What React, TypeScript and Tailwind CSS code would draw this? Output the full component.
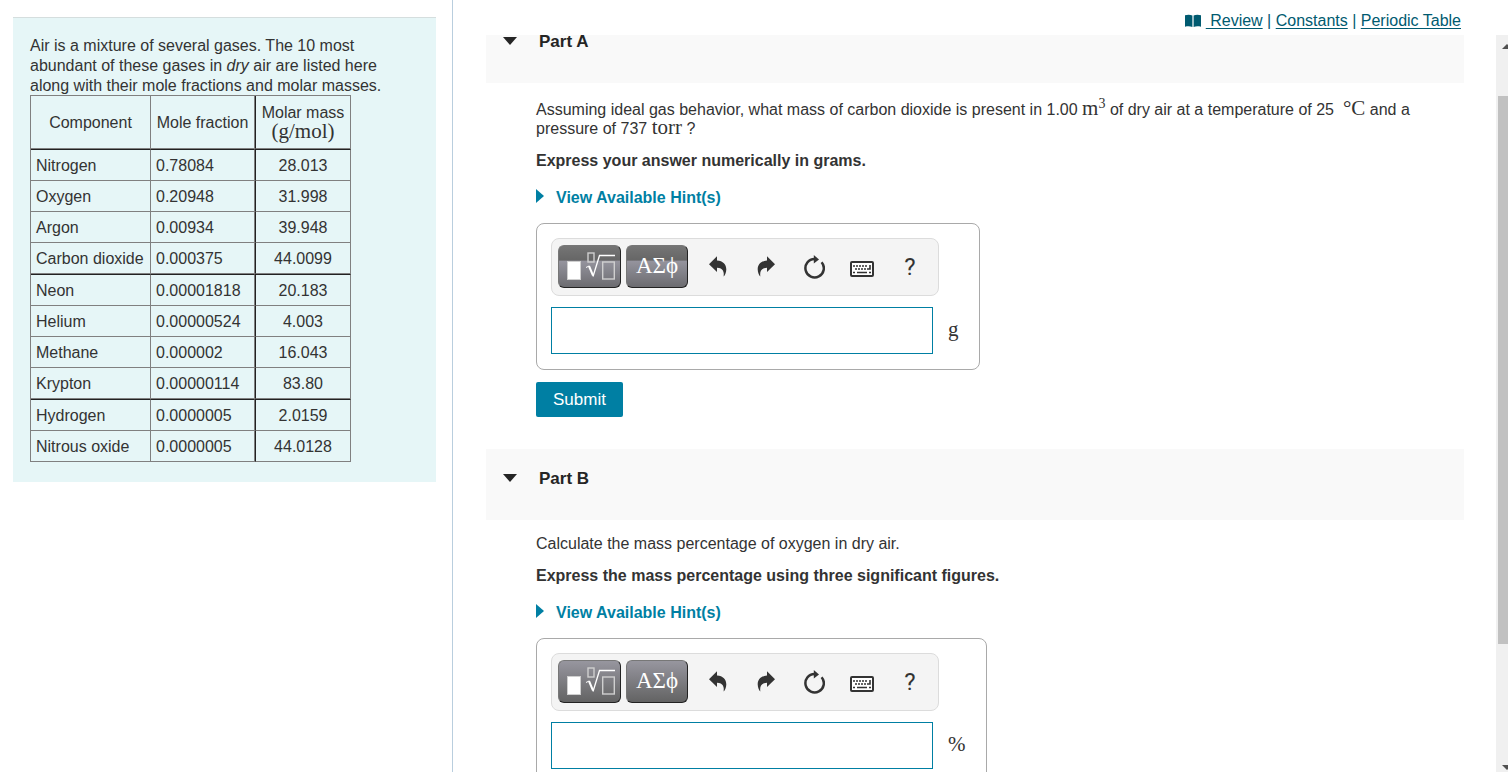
import React, { useState } from 'react'

interface Gas {
  name: string
  fraction: string
  mass: string
  groupStart?: boolean
}

interface AnswerBoxProps {
  id: string
  unit: string
  split?: boolean
}

interface PartProps {
  title: string
  children: React.ReactNode
}

const gases: Gas[] = [
  { name: 'Nitrogen', fraction: '0.78084', mass: '28.013', groupStart: true },
  { name: 'Oxygen', fraction: '0.20948', mass: '31.998' },
  { name: 'Argon', fraction: '0.00934', mass: '39.948' },
  { name: 'Carbon dioxide', fraction: '0.000375', mass: '44.0099' },
  { name: 'Neon', fraction: '0.00001818', mass: '20.183', groupStart: true },
  { name: 'Helium', fraction: '0.00000524', mass: '4.003' },
  { name: 'Methane', fraction: '0.000002', mass: '16.043' },
  { name: 'Krypton', fraction: '0.00000114', mass: '83.80' },
  { name: 'Hydrogen', fraction: '0.0000005', mass: '2.0159', groupStart: true },
  { name: 'Nitrous oxide', fraction: '0.0000005', mass: '44.0128' },
]

const Tex: React.FC<{ children: React.ReactNode }> = ({ children }) => (
  <span className="font-['Liberation_Serif',serif] text-[21px] leading-[0]">{children}</span>
)

const BookIcon = () => (
  <svg width="16" height="14" viewBox="0 0 16 14" fill="#005a70" aria-hidden="true">
    <path d="M0 1.2C2.5.5 5.3.5 7.4 1.4V13C5.2 12.2 2.5 12.2 0 12.8Z" />
    <path d="M8.6 1.4C10.7.5 13.5.5 16 1.2V12.8C13.5 12.2 10.8 12.2 8.6 13Z" />
  </svg>
)

const UndoIcon = () => (
  <svg width="18" height="21" viewBox="0 0 18 21" fill="#333" aria-hidden="true">
    <path d="M0 8.3 8 .3V4.6C14 5 17.4 8.6 17.3 13.5 17.2 16.6 16 19.3 14.6 20.6 15.4 16 14.2 12 8 11.7V16Z" />
  </svg>
)

const RedoIcon = () => (
  <svg width="18" height="21" viewBox="0 0 18 21" fill="#333" aria-hidden="true">
    <path d="M18 8.3 10 .3V4.6C4 5 .6 8.6.7 13.5.8 16.6 2 19.3 3.4 20.6 2.6 16 3.8 12 10 11.7V16Z" />
  </svg>
)

const ResetIcon = () => (
  <svg width="22" height="24" viewBox="0 0 22 24" aria-hidden="true">
    <path d="M11.5 4A9.2 9.2 0 1 0 18.6 7.2" fill="none" stroke="#333" strokeWidth="2.5" />
    <path d="M10.8 0 16 4.4 10.8 8.4Z" fill="#333" />
  </svg>
)

const KeyboardIcon = () => (
  <svg width="24" height="16" viewBox="0 0 24 16" aria-hidden="true">
    <rect x="1" y="1" width="22" height="14" rx="1" fill="#fff" stroke="#333" strokeWidth="2" />
    <path d="M3 5H18M5 8H17M3 11.5H5M19 11.5H21" stroke="#333" strokeWidth="1.6" strokeDasharray="2 1" />
    <path d="M7 11.5H17M20 4V8H17" fill="none" stroke="#333" strokeWidth="1.6" />
  </svg>
)

const RootIcon = () => (
  <svg width="61" height="41" viewBox="0 0 61 41" fill="none" aria-hidden="true">
    <rect x="8.5" y="15.5" width="13" height="18" fill="#fff" stroke="#cfcfcf" />
    <rect x="29" y="7" width="6" height="9" stroke="#cfcfcf" strokeWidth="1.4" />
    <rect x="43.7" y="16" width="11.6" height="17" stroke="#cfcfcf" strokeWidth="1.4" />
    <path d="M27 21.5 30 20" stroke="#fff" strokeWidth="1" />
    <path d="M30 20 34 29.5" stroke="#fff" strokeWidth="2" />
    <path d="M34 30.5 40.5 9.5H56" stroke="#fff" strokeWidth="1.3" />
  </svg>
)

const AnswerBox: React.FC<AnswerBoxProps> = ({ id, unit, split }) => {
  const [value, setValue] = useState('')
  const fill = split
    ? 'bg-[linear-gradient(#757575,#666_35%,#95949e_36%,#6c6c70)]'
    : 'bg-[linear-gradient(#97969f,#636363)]'
  const keyClass = `h-[43px] rounded-md border border-t-[#777] border-l-[#777] border-r-[#222] border-b-[#222] text-white flex items-center justify-center ${fill}`

  return (
    <div className="w-fit rounded-lg border border-[#a9a9a9] pt-[14px] pb-[15px] pl-[14px] pr-5">
      <div className="flex h-[58px] w-[388px] items-center rounded-lg border border-[#dcdcdc] bg-[#f4f4f4] pb-px pl-[6px]">
        <button type="button" aria-label="Templates" className={`w-[63px] ${keyClass}`}>
          <RootIcon />
        </button>
        <button
          type="button"
          aria-label="Symbols"
          className={`ml-[5px] w-[62px] pb-[2px] font-['Liberation_Serif',serif] text-[23px] leading-none ${keyClass}`}
        >
          ΑΣϕ
        </button>
        <div className="ml-[6px] flex">
          <button type="button" aria-label="Undo" className="flex h-10 w-12 items-center justify-center">
            <UndoIcon />
          </button>
          <button type="button" aria-label="Redo" className="flex h-10 w-12 items-center justify-center">
            <RedoIcon />
          </button>
          <button type="button" aria-label="Reset" className="flex h-10 w-12 items-center justify-center">
            <ResetIcon />
          </button>
          <button type="button" aria-label="Keyboard shortcuts" className="flex h-10 w-12 items-center justify-center pt-1">
            <KeyboardIcon />
          </button>
          <button
            type="button"
            aria-label="Help"
            className="flex h-10 w-12 items-center justify-center font-[Roboto,sans-serif] text-[24px] leading-none text-[#333]"
          >
            ?
          </button>
        </div>
      </div>
      <div className="mt-[11px] flex items-center">
        <input
          id={id}
          type="text"
          aria-label="Answer"
          value={value}
          onChange={(e) => setValue(e.target.value)}
          className="h-[47px] w-[382px] border border-[#007fa3] bg-white px-2 text-[16px] focus:outline-none"
        />
        <label htmlFor={id} className="ml-[15px]">
          <Tex>{unit}</Tex>
        </label>
      </div>
    </div>
  )
}

const Part: React.FC<PartProps> = ({ title, children }) => (
  <section className="pb-8">
    <h2 className="h-[71px] bg-[#f9f9f9] pt-5 pl-[17px]">
      <button type="button" className="flex items-center text-[17px] leading-5 font-bold text-[#252525]">
        <svg width="14" height="8" viewBox="0 0 14 8" fill="#252525" className="mr-[22px] mb-[2px]" aria-hidden="true">
          <path d="M0 0H14L7 8Z" />
        </svg>
        {title}
      </button>
    </h2>
    <div className="pt-[14px] pl-[50px]">{children}</div>
  </section>
)

const HintToggle = () => (
  <button type="button" className="mt-[18px] mb-4 flex items-center text-[16px] leading-[19px] font-bold text-[#007fa3]">
    <svg width="8" height="14" viewBox="0 0 8 14" fill="#007fa3" className="mr-3 mb-1" aria-hidden="true">
      <path d="M0 0V14L8 7Z" />
    </svg>
    View Available Hint(s)
  </button>
)

const App: React.FC = () => {
  return (
    <div className="flex h-screen overflow-hidden bg-white font-['Liberation_Sans',Arial,sans-serif] text-[16px] text-[#333]">
      {/* Problem introduction */}
      <aside className="w-[453px] shrink-0 border-r border-[#b9cede] pt-[17px] pr-4 pl-[13px]">
        <div className="border-t border-[#d5dede] bg-[#e6f6f7] pt-[18px] pr-4 pb-5 pl-[17px] leading-5">
          <p className="-mb-px">
            Air is a mixture of several gases. The 10 most abundant of these gases in <em>dry</em> air are listed here
            along with their mole fractions and molar masses.
          </p>
          <table className="w-[321px] table-fixed border-separate border-spacing-0 border-t border-l border-[#808080]">
            <thead>
              <tr className="h-[53px]">
                <th className="w-[120px] border-r border-b border-[#808080] pt-[2px] font-normal">Component</th>
                <th className="w-[104px] border-r border-b border-[#808080] pt-[2px] font-normal">Mole fraction</th>
                <th className="w-[96px] border-r border-b border-l border-[#808080] border-l-[#222] pt-px font-normal">
                  Molar mass
                  <br />
                  <Tex>(g/mol)</Tex>
                </th>
              </tr>
            </thead>
            <tbody>
              {gases.map((gas) => {
                const top = gas.groupStart ? 'border-t border-t-[#222]' : ''
                return (
                  <tr key={gas.name}>
                    <td className={`border-r border-b border-[#808080] pt-1.5 pb-1 pl-[5px] whitespace-nowrap ${top}`}>{gas.name}</td>
                    <td className={`border-r border-b border-[#808080] pt-1.5 pb-1 pl-[5px] ${top}`}>{gas.fraction}</td>
                    <td className={`border-r border-b border-l border-[#808080] border-l-[#222] pt-1.5 pb-1 text-center ${top}`}>
                      {gas.mass}
                    </td>
                  </tr>
                )
              })}
            </tbody>
          </table>
        </div>
      </aside>

      <main className="flex min-w-0 flex-1 flex-col">
        {/* Resource links */}
        <nav className="flex h-[35px] shrink-0 items-center justify-end pt-[6px] pr-[47px] text-[#005a70]">
          <BookIcon />
          <div className="ml-[5px] whitespace-pre">
            <a href="#review" className="underline underline-offset-2">{' Review'}</a>
            {' | '}
            <a href="#constants" className="underline underline-offset-2">Constants</a>
            {' | '}
            <a href="#periodic-table" className="underline underline-offset-2">Periodic Table</a>
          </div>
        </nav>

        <div className="flex min-h-0 flex-1">
          <div className="min-w-0 flex-1 overflow-hidden pr-8 pl-[33px]">
            <div className="-mt-[23px]">
              <Part title="Part A">
                <p className="pt-[3px] leading-[19px]">
                  Assuming ideal gas behavior, what mass of carbon dioxide is present in 1.00{' '}
                  <Tex>
                    m<sup className="text-[14px]">3</sup>
                  </Tex>{' '}
                  of dry air at a temperature of 25 &nbsp;<Tex>°C</Tex> and a pressure of 737 <Tex>torr</Tex> ?
                </p>
                <p className="mt-[13px] leading-[19px] font-bold">Express your answer numerically in grams.</p>
                <HintToggle />
                <AnswerBox id="answer-a" unit="g" split />
                <button type="button" className="mt-3 h-[35px] rounded-xs bg-[#007fa3] px-[17px] text-[17px] text-white">
                  Submit
                </button>
              </Part>
              <Part title="Part B">
                <p className="leading-[19px]">Calculate the mass percentage of oxygen in dry air.</p>
                <p className="mt-[13px] leading-[19px] font-bold">
                  Express the mass percentage using three significant figures.
                </p>
                <HintToggle />
                <AnswerBox id="answer-b" unit="%" />
              </Part>
            </div>
          </div>

          {/* Scroll track, partly off the right edge */}
          <div className="flex w-3 shrink-0 flex-col overflow-hidden bg-[#f0f0f0] pl-[2px]">
            <svg width="14" height="61" viewBox="0 0 14 61" fill="#505050" className="shrink-0" aria-hidden="true">
              <path d="M4 14 9 9 14 14Z" />
            </svg>
            <div className="h-[548px] bg-[#c1c1c1]" />
            <svg width="14" height="8" viewBox="0 0 14 8" fill="#505050" className="mt-auto shrink-0" aria-hidden="true">
              <path d="M4 1H14L9 6Z" />
            </svg>
          </div>
        </div>
      </main>
    </div>
  )
}

export default App
